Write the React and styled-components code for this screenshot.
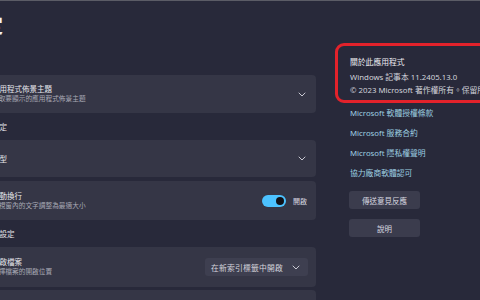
import React from 'react';
import styled, { createGlobalStyle } from 'styled-components';

const GlobalStyle = createGlobalStyle`
  html, body {
    margin: 0;
    padding: 0;
    background: #28293a;
  }
`;

const Page = styled.div`
  width: 480px;
  height: 300px;
  overflow: hidden;
  box-sizing: border-box;
  background: #28293a;
  border-top: 1px solid #5b5c66;
  font-family: "Noto Sans", "Noto Sans CJK TC", sans-serif;
  white-space: nowrap;
`;

const Title = styled.h1`
  margin: 13px 0 0 -37px;
  font-size: 20px;
  line-height: 24px;
  font-weight: 600;
  color: #f2f2f6;
`;

const Body = styled.div`
  display: grid;
  grid-template-columns: 356px 1fr;
  column-gap: 34px;
  margin-left: -40px;
`;

const LeftColumn = styled.div`
  display: flex;
  flex-direction: column;
  padding-top: 37px;
`;

const Card = styled.div`
  display: flex;
  align-items: center;
  justify-content: space-between;
  box-sizing: border-box;
  height: ${(p) => p.$h}px;
  margin-top: ${(p) => p.$gap || 0}px;
  padding: 0 ${(p) => p.$pr ?? 10}px 0 32px;
  background: #353646;
  border-radius: 4px;
`;

const SectionHeader = styled.div`
  display: flex;
  align-items: center;
  height: 27px;
  padding-left: 17px;
  font-size: 7.5px;
  color: #e2e2e8;
`;

const CardText = styled.div`
  display: flex;
  flex-direction: column;
`;

const CardTitle = styled.span`
  font-size: 7.5px;
  line-height: 10px;
  color: #e6e6ec;
`;

const CardSub = styled.span`
  font-size: 6.7px;
  line-height: 10px;
  color: #a8a9b5;
`;

const RightGroup = styled.div`
  display: flex;
  align-items: center;
`;

const Toggle = styled.div`
  display: flex;
  align-items: center;
  justify-content: flex-end;
  box-sizing: border-box;
  width: 24px;
  height: 12px;
  padding-right: 2px;
  border-radius: 6px;
  background: #4cc2ff;
`;

const Knob = styled.div`
  width: 8px;
  height: 8px;
  border-radius: 50%;
  background: #111218;
`;

const ToggleLabel = styled.span`
  margin-left: 7px;
  font-size: 7px;
  color: #d8d8e0;
`;

const Dropdown = styled.div`
  display: flex;
  align-items: center;
  gap: 9px;
  height: 18px;
  padding: 0 8px 0 6px;
  border-radius: 3px;
  background: #3e3f50;
  font-size: 7.8px;
  letter-spacing: 0.2px;
  color: #d4d4dc;
`;

const RightColumn = styled.div`
  display: flex;
  flex-direction: column;
  align-items: flex-start;
  padding-top: 5px;
`;

const AboutBox = styled.div`
  align-self: stretch;
  margin: 0 -30px 0 -15px;
  padding: 10px 0 3px 12px;
  border: 3px solid #e3222b;
  border-radius: 9px;
`;

const AboutHeading = styled.div`
  font-size: 7.8px;
  line-height: 12px;
  margin-bottom: 3px;
  color: #ececf2;
`;

const AboutLine = styled.div`
  font-size: 7.8px;
  line-height: 13px;
  color: #d2d3db;
`;

const Links = styled.div`
  display: flex;
  flex-direction: column;
  gap: 8px;
  margin-top: 4px;
`;

const Link = styled.a`
  font-size: 7.8px;
  line-height: 12px;
  color: #9ecfe2;
  text-decoration: none;
`;

const Buttons = styled.div`
  display: flex;
  flex-direction: column;
  gap: 10px;
  margin-top: 12px;
  margin-left: -1px;
`;

const Button = styled.button`
  width: 71px;
  height: 18px;
  padding: 0;
  border: none;
  border-radius: 3px;
  background: #3b3c4d;
  font-family: inherit;
  font-size: 7.5px;
  color: #d8d8e0;
`;

const Chevron = () => (
  <svg width="8" height="5" viewBox="0 0 8 5">
    <path d="M1 1 L4 4 L7 1" fill="none" stroke="#c9c9d2" strokeWidth="1" strokeLinecap="round" strokeLinejoin="round" />
  </svg>
);

const App = () => {
  return (
    <>
      <GlobalStyle />
      <Page>
        <Title>設定</Title>
        <Body>
          <LeftColumn>
            <Card $h={38}>
              <CardText>
                <CardTitle>應用程式佈景主題</CardTitle>
                <CardSub>選取要顯示的應用程式佈景主題</CardSub>
              </CardText>
              <Chevron />
            </Card>

            <SectionHeader>字型設定</SectionHeader>
            <Card $h={37}>
              <CardText>
                <CardTitle>字型</CardTitle>
              </CardText>
              <Chevron />
            </Card>
            <Card $h={39} $gap={4} $pr={9}>
              <CardText>
                <CardTitle>自動換行</CardTitle>
                <CardSub>將視窗內的文字調整為最適大小</CardSub>
              </CardText>
              <RightGroup>
                <Toggle>
                  <Knob />
                </Toggle>
                <ToggleLabel>開啟</ToggleLabel>
              </RightGroup>
            </Card>

            <SectionHeader>開啟時設定</SectionHeader>
            <Card $h={40} $pr={8}>
              <CardText>
                <CardTitle>開啟檔案</CardTitle>
                <CardSub>選擇檔案的開啟位置</CardSub>
              </CardText>
              <Dropdown>
                在新索引標籤中開啟
                <Chevron />
              </Dropdown>
            </Card>
            <Card $h={40} $gap={3} />
          </LeftColumn>

          <RightColumn>
            <AboutBox>
              <AboutHeading>關於此應用程式</AboutHeading>
              <AboutLine>Windows 記事本 11.2405.13.0</AboutLine>
              <AboutLine>© 2023 Microsoft 著作權所有。保留所有權利。</AboutLine>
            </AboutBox>
            <Links>
              <Link href="#">Microsoft 軟體授權條款</Link>
              <Link href="#">Microsoft 服務合約</Link>
              <Link href="#">Microsoft 隱私權聲明</Link>
              <Link href="#">協力廠商軟體認可</Link>
            </Links>
            <Buttons>
              <Button>傳送意見反應</Button>
              <Button>說明</Button>
            </Buttons>
          </RightColumn>
        </Body>
      </Page>
    </>
  );
};

export default App;
